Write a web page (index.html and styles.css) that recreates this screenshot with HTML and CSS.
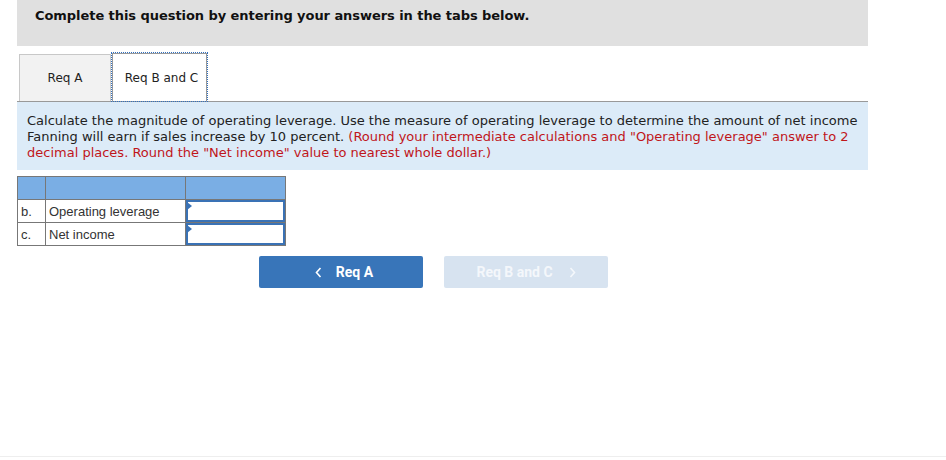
FILE: index.html
```html
<!DOCTYPE html>
<html lang="en">
<head>
    <meta charset="UTF-8">
    <title>Req B and C</title>
    <link rel="stylesheet" href="styles.css">
</head>
<body>
    <div class="page">
        <!-- Header -->
        <div class="question-head">
            <p>Complete this question by entering your answers in the tabs below.</p>
        </div>

        <!-- Tabs -->
        <div class="tabs">
            <div class="tab">Req A</div>
            <div class="tab active">Req B and C</div>
        </div>

        <div class="instructions">
            Calculate the magnitude of operating leverage. Use the measure of operating leverage to determine the amount of net income Fanning will earn if sales increase by 10 percent. <span class="hint">(Round your intermediate calculations and "Operating leverage" answer to 2 decimal places. Round the "Net income" value to nearest whole dollar.)</span>
        </div>

        <!-- Answer table -->
        <table class="answer-table">
            <tr class="head-row">
                <td class="col-letter"></td>
                <td class="col-label"></td>
                <td class="col-input"></td>
            </tr>
            <tr>
                <td>b.</td>
                <td>Operating leverage</td>
                <td class="input-cell"><div class="answer-box"></div></td>
            </tr>
            <tr>
                <td>c.</td>
                <td>Net income</td>
                <td class="input-cell"><div class="answer-box"></div></td>
            </tr>
        </table>

        <!-- Nav buttons -->
        <div class="nav-buttons">
            <button class="nav-btn prev">
                <svg class="chev" width="7" height="11" viewBox="0 0 7 11"><path d="M5.5 1 L1.5 5.5 L5.5 10" fill="none" stroke="currentColor" stroke-width="1.6"/></svg>
                <span>Req A</span>
            </button>
            <button class="nav-btn next" disabled>
                <span>Req B and C</span>
                <svg class="chev" width="7" height="11" viewBox="0 0 7 11"><path d="M1.5 1 L5.5 5.5 L1.5 10" fill="none" stroke="currentColor" stroke-width="1.6"/></svg>
            </button>
        </div>
    </div>
    <div class="bottom-line"></div>
</body>
</html>
```

FILE: styles.css
```css
body {
    margin: 0;
    font-family: 'DejaVu Sans', Verdana, sans-serif;
    font-size: 13px;
    color: #222;
    background-color: #fff;
    height: 460px;
    position: relative;
}

.page {
    width: 851px;
    margin-left: 17px;
}

/* Header */
.question-head {
    background-color: #e0e0e0;
    height: 46px;
    padding: 0 18px;
    box-sizing: border-box;
}

.question-head p {
    margin: 0;
    padding-top: 8px;
    font-weight: bold;
    font-size: 13px;
    letter-spacing: -0.06px;
    color: #111;
}

/* Tabs */
.tabs {
    display: flex;
    margin-top: 8px;
    padding-left: 2px;
    border-bottom: 1px solid #999;
}

.tab {
    width: 92px;
    height: 47px;
    box-sizing: border-box;
    display: flex;
    align-items: center;
    justify-content: center;
    background-color: #f2f2f2;
    border: 1px solid #c8c8c8;
    border-bottom: none;
    font-size: 12px;
    color: #222;
}

.tab.active {
    width: 95px;
    height: 48px;
    margin-top: -1px;
    margin-left: 1px;
    padding-top: 1px;
    padding-left: 4px;
    background-color: #fff;
    border: 1px solid #999;
    border-bottom: none;
    outline: 1px dotted #2f6fbf;
}

.instructions {
    background-color: #dcebf8;
    padding: 11px 10px 9px 10px;
    line-height: 16px;
    color: #222;
}

.hint {
    color: #c0161b;
}

/* Answer table */
.answer-table {
    border-collapse: collapse;
    margin-top: 6px;
    font-family: 'Liberation Sans', Arial, sans-serif;
    font-size: 13px;
    color: #333;
}

.answer-table tr {
    height: 23px;
}

.answer-table td {
    border: 1px solid #777;
    padding: 0 3px;
}

.head-row td {
    background-color: #7aaee4;
}

.col-letter { width: 21px; }
.col-label { width: 133px; }
.col-input { width: 93px; }

.answer-table td.input-cell {
    padding: 0;
}

.answer-box {
    height: 22px;
    box-sizing: border-box;
    border: 2px solid #3a72b5;
    background-color: #fff;
    position: relative;
}

.answer-box::before {
    content: '';
    position: absolute;
    left: -1px;
    top: 0;
    border-left: 5px solid #3a72b5;
    border-top: 4px solid transparent;
    border-bottom: 4px solid transparent;
}

/* Nav buttons */
.nav-buttons {
    display: flex;
    gap: 21px;
    margin-top: 10px;
    padding-left: 242px;
}

.nav-btn {
    width: 164px;
    height: 32px;
    border: none;
    border-radius: 2px;
    font-family: Roboto, 'Liberation Sans', sans-serif;
    font-weight: bold;
    font-size: 14px;
    color: #fff;
    display: flex;
    align-items: center;
    justify-content: center;
    gap: 14px;
    padding: 0;
}

.nav-btn.prev {
    background-color: #3875b9;
    padding-left: 6px;
}

.nav-btn.next {
    background-color: #d7e3f0;
    color: #f4f7fb;
    gap: 16px;
}

.chev {
    display: block;
}

.bottom-line {
    position: absolute;
    left: 0;
    right: 0;
    top: 456px;
    height: 1px;
    background-color: #eee;
}
```
